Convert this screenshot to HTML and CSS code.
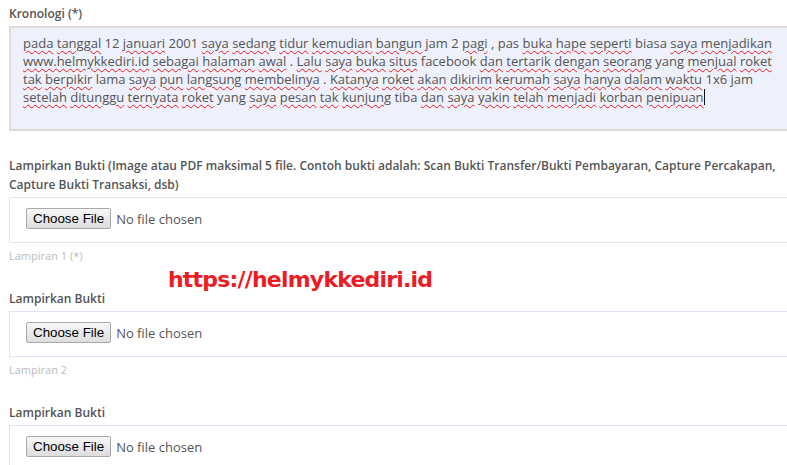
FILE: index.html
```html
<!DOCTYPE html>
<html lang="id">
<head>
<meta charset="UTF-8">
<title>Laporan Penipuan</title>
<link rel="stylesheet" href="styles.css">
</head>
<body>
<form class="report-form">
  <div class="form-group">
    <label class="form-label">Kronologi (*)</label>
    <div class="textarea" role="textbox">
      <div><s>pada</s> <s>tanggal</s> 12 <s>januari</s> 2001 <s>saya</s> <s>sedang</s> <s>tidur</s> <s>kemudian</s> <s>bangun</s> jam 2 <s>pagi</s> , pas <s>buka</s> <s>hape</s> <s>seperti</s> biasa <s>saya</s> <s>menjadikan</s></div>
      <div><s>www.helmykkediri.id</s> <s>sebagai</s> <s>halaman</s> <s>awal</s> . <s>Lalu</s> <s>saya</s> <s>buka</s> <s>situs</s> facebook <s>dan</s> <s>tertarik</s> <s>dengan</s> <s>seorang</s> yang <s>menjual</s> <s>roket</s></div>
      <div><s>tak</s> <s>berpikir</s> lama <s>saya</s> <s>pun</s> <s>langsung</s> <s>membelinya</s> . <s>Katanya</s> <s>roket</s> <s>akan</s> <s>dikirim</s> <s>kerumah</s> <s>saya</s> <s>hanya</s> <s>dalam</s> <s>waktu</s> 1x6 jam</div>
      <div><s>setelah</s> <s>ditunggu</s> <s>ternyata</s> <s>roket</s> yang <s>saya</s> <s>pesan</s> <s>tak</s> <s>kunjung</s> tiba <s>dan</s> <s>saya</s> <s>yakin</s> <s>telah</s> <s>menjadi</s> <s>korban</s> <s>penipuan</s><span class="caret"></span></div>
    </div>
  </div>

  <div class="form-group">
    <label class="form-label">Lampirkan Bukti (Image atau PDF maksimal 5 file. Contoh bukti adalah: Scan Bukti Transfer/Bukti Pembayaran, Capture Percakapan,<br>Capture Bukti Transaksi, dsb)</label>
    <div class="file-box">
      <label class="file-input"><input type="file" hidden><span class="file-btn">Choose File</span><span class="file-name">No file chosen</span></label>
    </div>
    <div class="help">Lampiran 1 (*)</div>
  </div>

  <div class="form-group">
    <label class="form-label">Lampirkan Bukti</label>
    <div class="file-box">
      <label class="file-input"><input type="file" hidden><span class="file-btn">Choose File</span><span class="file-name">No file chosen</span></label>
    </div>
    <div class="help">Lampiran 2</div>
  </div>

  <div class="form-group">
    <label class="form-label">Lampirkan Bukti</label>
    <div class="file-box">
      <label class="file-input"><input type="file" hidden><span class="file-btn">Choose File</span><span class="file-name">No file chosen</span></label>
    </div>
  </div>
</form>

<div class="watermark">https://helmykkediri.id</div>
</body>
</html>
```

FILE: styles.css
```css
body {
  margin: 0;
  padding: 4px 0 0 9px;
  background: #fff;
  color: #555;
  font-family: "Open Sans", "DejaVu Sans", sans-serif;
  overflow: hidden;
  position: relative;
}
.report-form { width: 800px; }
.form-group { margin-bottom: 25px; }
.form-label {
  display: block;
  font-size: 12px;
  font-weight: 600;
  line-height: 19px;
  margin-bottom: 3px;
  color: #555;
}

/* kotak kronologi */
.textarea {
  box-sizing: border-box;
  height: 105px;
  border: 2px solid #dedbd6;
  background: #eef0fc;
  padding: 6px 12px;
  font-size: 13px;
  line-height: 18px;
  color: #555;
  white-space: nowrap;
}
.textarea s {
  text-decoration: underline wavy #e41b1b;
  text-decoration-thickness: 1px;
  text-underline-offset: 2px;
}
.caret {
  display: inline-block;
  width: 0;
  height: 16px;
  border-left: 1px solid #111;
  vertical-align: -3px;
}

/* input file */
.file-box {
  box-sizing: border-box;
  height: 46px;
  border: 1px solid #dde3f6;
  padding: 10px 16px 0;
}
.file-input { display: flex; align-items: center; gap: 5px; cursor: pointer; }
.file-btn {
  box-sizing: border-box;
  height: 21px;
  padding: 0 6px;
  border: 1px solid #a9a9a9;
  border-radius: 2px;
  background: linear-gradient(#f7f7f7, #dddddd);
  color: #000;
  font: 13.33px/19px "Liberation Sans", Arial, sans-serif;
}
.file-name { font-size: 13px; color: #555; }
.help {
  margin-top: 5px;
  font-size: 11px;
  line-height: 16px;
  color: #bbb;
}

.watermark {
  position: absolute;
  left: 168px;
  top: 265px;
  font: bold 22px/30px "DejaVu Sans", Verdana, sans-serif;
  letter-spacing: -0.8px;
  color: #ec1c24;
}
```
